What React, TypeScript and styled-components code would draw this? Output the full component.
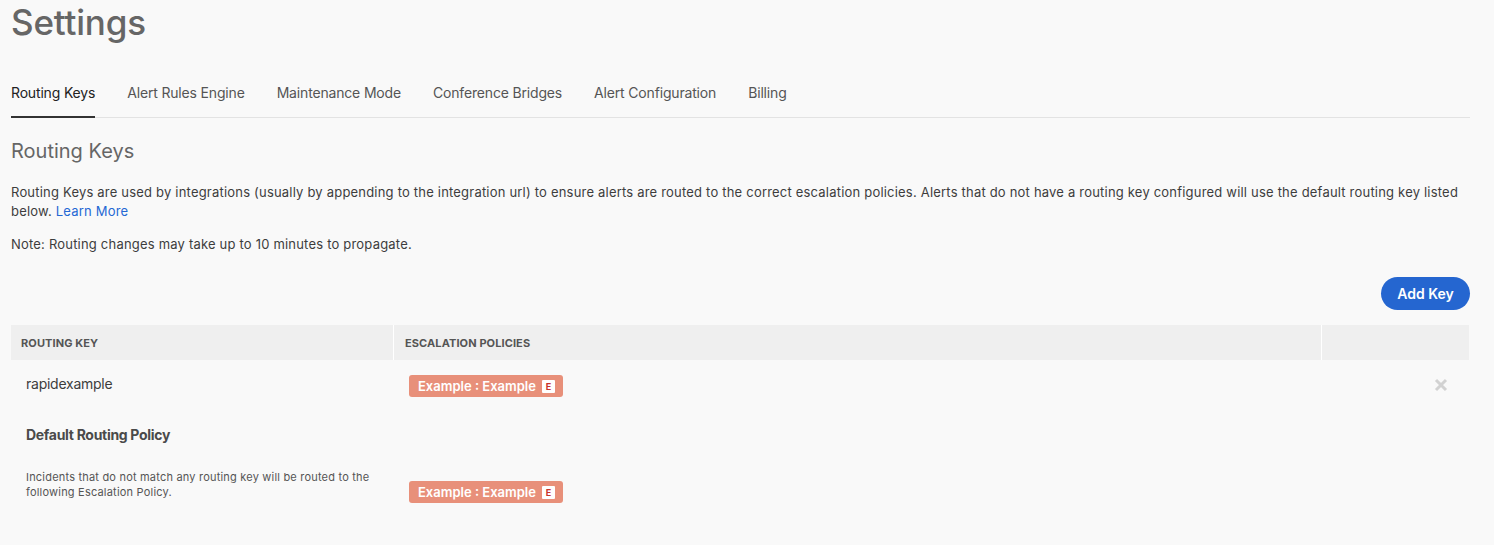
import styled, { createGlobalStyle } from "styled-components";

const GlobalStyle = createGlobalStyle`
  body {
    margin: 0;
    background: #f9f9f9;
    font-family: Inter, "Open Sans", "Liberation Sans", sans-serif;
    color: #3d3d3d;
  }
`;

const Page = styled.div`
  padding: 0 24px 40px 11px;
`;

const Title = styled.h1`
  margin: 0;
  font-size: 35px;
  line-height: 44px;
  font-weight: 500;
  color: #666;
  letter-spacing: -0.2px;
`;

const TabBar = styled.nav`
  display: flex;
  gap: 32px;
  margin-top: 26px;
  border-bottom: 1px solid #e3e3e3;
`;

const Tab = styled.div<{ $active?: boolean }>`
  font-size: 14px;
  line-height: 20px;
  letter-spacing: -0.17px;
  padding: 13px 0 13px;
  color: ${(p) => (p.$active ? "#222" : "#555")};
  border-bottom: 2px solid ${(p) => (p.$active ? "#333" : "transparent")};
  margin-bottom: -1px;
`;

const SectionTitle = styled.h2`
  margin: 19px 0 0;
  font-size: 20px;
  line-height: 28px;
  font-weight: 400;
  color: #666;
`;

const Text = styled.p<{ $gap: number }>`
  margin: ${(p) => p.$gap}px 0 0;
  font-size: 13px;
  line-height: 19px;
  letter-spacing: 0.2px;
  color: #3d3d3d;
`;

const Link = styled.a`
  color: #2468d4;
  text-decoration: none;
`;

const Actions = styled.div`
  display: flex;
  justify-content: flex-end;
  margin-top: 23px;
`;

const Button = styled.button`
  height: 33px;
  width: 89px;
  border: none;
  border-radius: 17px;
  background: #2566d0;
  color: #fff;
  font-family: inherit;
  font-size: 14px;
  font-weight: 600;
  cursor: pointer;
`;

const Table = styled.div`
  display: grid;
  grid-template-columns: 382px 1fr 148px;
  margin: 15px 1px 0 0;
`;

const HeadCell = styled.div<{ $first?: boolean }>`
  background: #efefef;
  height: 35px;
  display: flex;
  align-items: center;
  padding-left: ${(p) => (p.$first ? 10 : 11)}px;
  border-left: ${(p) => (p.$first ? "none" : "1px solid #fff")};
  font-size: 11px;
  font-weight: 700;
  color: #555;
  text-transform: uppercase;
  letter-spacing: 0.1px;
`;

const Cell = styled.div<{ $top: number; $pad?: number; $end?: boolean }>`
  display: flex;
  align-items: flex-start;
  justify-content: ${(p) => (p.$end ? "flex-end" : "flex-start")};
  padding: ${(p) => p.$top}px ${(p) => (p.$end ? 21 : 0)}px 0
    ${(p) => p.$pad ?? 15}px;
`;

const KeyName = styled.span`
  font-size: 14px;
  line-height: 20px;
  letter-spacing: -0.25px;
  color: #3d3d3d;
`;

const PolicyTitle = styled.span`
  font-size: 14px;
  line-height: 20px;
  font-weight: 700;
  letter-spacing: -0.3px;
  color: #4a4a4a;
`;

const Description = styled.span`
  font-size: 11px;
  line-height: 15px;
  letter-spacing: 0.2px;
  color: #555;
  max-width: 360px;
`;

const Badge = styled.span`
  display: inline-flex;
  align-items: center;
  gap: 6px;
  height: 22px;
  padding: 0 8px 0 9px;
  border-radius: 3px;
  background: #e8907a;
  color: #fff;
  font-size: 13px;
  font-weight: 600;
  white-space: nowrap;
`;

const BadgeMark = styled.span`
  display: inline-flex;
  align-items: center;
  justify-content: center;
  width: 13px;
  height: 13px;
  border-radius: 1px;
  background: #fff;
  color: #c8342b;
  font-size: 9px;
  font-weight: 700;
`;

const Remove = styled.button`
  border: none;
  background: none;
  padding: 0;
  margin-top: 4px;
  display: flex;
  cursor: pointer;
`;

function PolicyBadge() {
  return (
    <Badge>
      Example : Example
      <BadgeMark>E</BadgeMark>
    </Badge>
  );
}

export default function App() {
  return (
    <>
      <GlobalStyle />
      <Page>
        <Title>Settings</Title>
        <TabBar>
          <Tab $active>Routing Keys</Tab>
          <Tab>Alert Rules Engine</Tab>
          <Tab>Maintenance Mode</Tab>
          <Tab>Conference Bridges</Tab>
          <Tab>Alert Configuration</Tab>
          <Tab>Billing</Tab>
        </TabBar>

        <SectionTitle>Routing Keys</SectionTitle>
        <Text $gap={18}>
          Routing Keys are used by integrations (usually by appending to the
          integration url) to ensure alerts are routed to the correct
          escalation policies. Alerts that do not have a routing key configured
          will use the default routing key listed below.{" "}
          <Link href="#">Learn More</Link>
        </Text>
        <Text $gap={14}>
          Note: Routing changes may take up to 10 minutes to propagate.
        </Text>

        <Actions>
          <Button>Add Key</Button>
        </Actions>

        <Table>
          <HeadCell $first>Routing Key</HeadCell>
          <HeadCell>Escalation Policies</HeadCell>
          <HeadCell />

          <Cell $top={14}>
            <KeyName>rapidexample</KeyName>
          </Cell>
          <Cell $top={15} $pad={16}>
            <PolicyBadge />
          </Cell>
          <Cell $top={14} $end>
            <Remove aria-label="Remove">
              <svg width="14" height="14" viewBox="0 0 14 14">
                <path
                  d="M2 2 L12 12 M12 2 L2 12"
                  stroke="#d2d2d2"
                  strokeWidth="3"
                  strokeLinecap="butt"
                />
              </svg>
            </Remove>
          </Cell>

          <Cell $top={28}>
            <PolicyTitle>Default Routing Policy</PolicyTitle>
          </Cell>
          <Cell $top={28} />
          <Cell $top={28} />

          <Cell $top={25}>
            <Description>
              Incidents that do not match any routing key will be routed to the
              following Escalation Policy.
            </Description>
          </Cell>
          <Cell $top={36} $pad={16}>
            <PolicyBadge />
          </Cell>
          <Cell $top={25} />
        </Table>
      </Page>
    </>
  );
}
